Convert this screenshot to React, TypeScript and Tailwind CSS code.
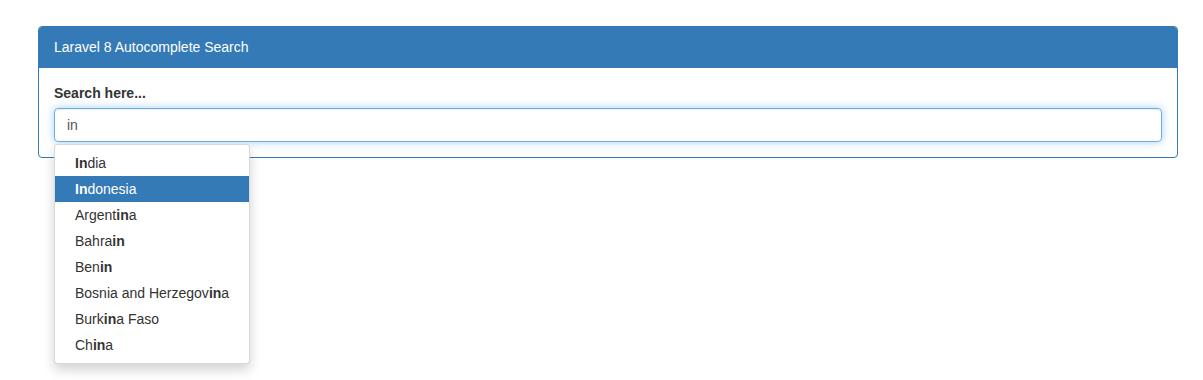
import React from "react";

const items: { parts: [string, boolean][] }[] = [
  { parts: [["In", true], ["dia", false]] },
  { parts: [["In", true], ["donesia", false]] },
  { parts: [["Argent", false], ["in", true], ["a", false]] },
  { parts: [["Bahra", false], ["in", true]] },
  { parts: [["Ben", false], ["in", true]] },
  { parts: [["Bosnia and Herzegov", false], ["in", true], ["a", false]] },
  { parts: [["Burk", false], ["in", true], ["a Faso", false]] },
  { parts: [["Ch", false], ["in", true], ["a", false]] },
];

export default function App() {
  return (
    <div
      className="min-h-[380px] bg-white text-[14px] leading-[20px] text-[#333]"
      style={{ fontFamily: '"Liberation Sans", Arial, Helvetica, sans-serif' }}
    >
      <div className="pl-[38px] pt-[26px] w-[1178px]">
        <div className="border border-[#337ab7] rounded-[4px] bg-white">
          <div className="bg-[#337ab7] text-white px-[15px] py-[10px] border-b border-[#337ab7] rounded-t-[3px]">
            Laravel 8 Autocomplete Search
          </div>
          <div className="p-[15px]">
            <div className="font-bold mb-[5px]">Search here...</div>
            <div className="relative">
              <div className="h-[34px] border border-[#66afe9] rounded-[4px] px-[12px] py-[6px] text-[#555] shadow-[inset_0_1px_1px_rgba(0,0,0,0.075),0_0_8px_rgba(102,175,233,0.6)]">
                in
              </div>
              <div className="absolute left-0 top-[36px] w-[196px] bg-white border border-[rgba(0,0,0,0.15)] rounded-[4px] py-[5px] shadow-[0_6px_12px_rgba(0,0,0,0.175)] z-10">
                {items.map((it, i) => (
                  <div
                    key={i}
                    className={
                      "px-[20px] py-[3px] whitespace-nowrap " +
                      (i === 1 ? "bg-[#337ab7] text-white" : "text-[#333]")
                    }
                  >
                    {it.parts.map(([t, b], j) =>
                      b ? (
                        <strong key={j} className="font-bold">
                          {t}
                        </strong>
                      ) : (
                        <span key={j}>{t}</span>
                      )
                    )}
                  </div>
                ))}
              </div>
            </div>
          </div>
        </div>
      </div>
    </div>
  );
}
